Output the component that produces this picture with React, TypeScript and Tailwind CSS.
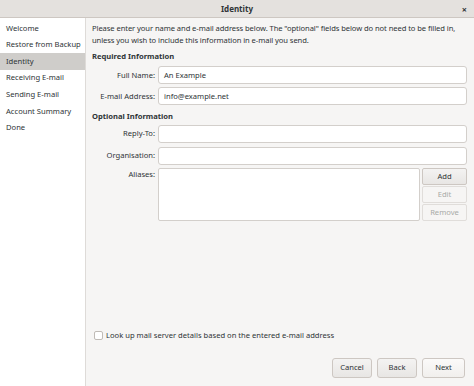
import React from "react";

const steps = [
  "Welcome",
  "Restore from Backup",
  "Identity",
  "Receiving E-mail",
  "Sending E-mail",
  "Account Summary",
  "Done",
];

const Field = ({ label, value }: { label: string; value?: string }) => (
  <div className="flex items-center h-[18px]">
    <div className="w-[66px] text-right pr-[3px] text-[#2e3436]">{label}</div>
    <div className="flex-1 h-[18px] bg-white border border-[#d3cfcb] rounded-[3px] px-[5px] flex items-center text-[#2e3436]">
      {value}
    </div>
  </div>
);

export default function App() {
  const [active] = React.useState(2);
  const [lookup, setLookup] = React.useState(false);

  return (
    <div
      className="w-[474px] h-[386px] flex flex-col bg-[#f6f5f4] text-[7.6px] text-[#2e3436] overflow-hidden"
      style={{ fontFamily: '"Noto Sans", "Open Sans", sans-serif' }}>
      {/* title bar */}
      <div className="h-[18px] flex items-center justify-center relative bg-[#e4e1de] border-b border-[#cdc7c2]">
        <span className="font-bold text-[8px] text-[#2e3436]">Identity</span>
        <span className="absolute right-[7px] top-[3px] text-[9px] font-bold text-[#2e3436]">×</span>
      </div>

      <div className="flex flex-1 min-h-0">
        {/* side list */}
        <ul className="w-[86px] bg-white border-r border-[#dedbd8] pt-[2px]">
          {steps.map((s, i) => (
            <li
              key={s}
              className={
                "h-[16.6px] flex items-center pl-[6px] whitespace-nowrap " +
                (i === active ? "bg-[#cfcdca]" : "")
              }>
              {s}
            </li>
          ))}
        </ul>

        {/* page */}
        <div className="flex-1 flex flex-col pl-[6px] pr-[7px] pt-[5px] pb-[8px]">
          <p className="leading-[11.5px] tracking-[-0.08px]">
            Please enter your name and e-mail address below. The "optional" fields below do not
            need to be filled in, unless you wish to include this information in e-mail you send.
          </p>

          <div className="font-bold mt-[5px] mb-[4px]">Required Information</div>
          <div className="flex flex-col gap-[3px]">
            <Field label="Full Name:" value="An Example" />
            <Field label="E-mail Address:" value="info@example.net" />
          </div>

          <div className="font-bold mt-[6px] mb-[2px]">Optional Information</div>
          <div className="flex flex-col gap-[4px]">
            <Field label="Reply-To:" />
            <Field label="Organisation:" />
            <div className="flex h-[53px] -mt-px">
              <div className="w-[66px] text-right pr-[3px] pt-[1px]">Aliases:</div>
              <div className="flex-1 bg-white border border-[#d3cfcb] rounded-[2px]" />
              <div className="w-[45px] ml-[2px] flex flex-col gap-px">
                <button className="h-[17px] border border-[#cdc7c2] rounded-[2px] bg-gradient-to-b from-[#f4f3f2] to-[#e8e6e4] text-[#2e3436]">
                  Add
                </button>
                <button className="h-[17px] border border-[#e0ddda] rounded-[2px] bg-[#f6f5f4] text-[#a8aaa7]">
                  Edit
                </button>
                <button className="h-[17px] border border-[#e0ddda] rounded-[2px] bg-[#f6f5f4] text-[#a8aaa7]">
                  Remove
                </button>
              </div>
            </div>
          </div>

          <div className="flex-1" />

          <label className="flex items-center gap-[3px] ml-[2px]">
            <input
              type="checkbox"
              checked={lookup}
              onChange={e => setLookup(e.target.checked)}
              className="appearance-none w-[9px] h-[9px] border border-[#c0bbb6] rounded-[2px] bg-white"
            />
            <span>Look up mail server details based on the entered e-mail address</span>
          </label>

          <div className="flex justify-end gap-[5px] mt-[17px]">
            <button className="w-[40px] h-[20px] border border-[#cdc7c2] rounded-[3px] bg-gradient-to-b from-[#f4f3f2] to-[#e8e6e4]">
              Cancel
            </button>
            <button className="w-[40px] h-[20px] border border-[#cdc7c2] rounded-[3px] bg-gradient-to-b from-[#f4f3f2] to-[#e8e6e4]">
              Back
            </button>
            <button className="w-[43px] h-[20px] border border-[#cdc7c2] rounded-[3px] bg-gradient-to-b from-[#fbfaf9] to-[#f1efed] mr-[2px]">
              Next
            </button>
          </div>
        </div>
      </div>
    </div>
  );
}
